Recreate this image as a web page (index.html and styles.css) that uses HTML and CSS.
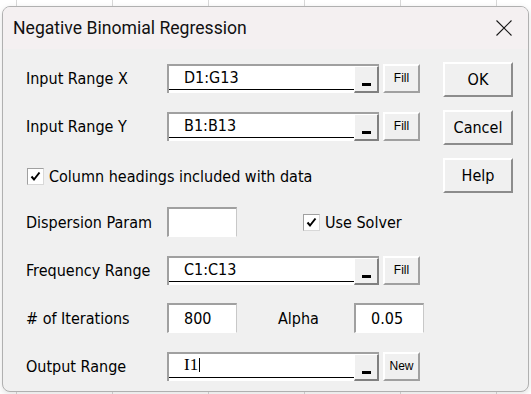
FILE: index.html
```html
<!DOCTYPE html>
<html>
<head>
<meta charset="utf-8">
<link rel="stylesheet" href="styles.css">
</head>
<body>
<div class="dialog">
  <div class="titlebar">
    <span class="title">Negative Binomial Regression</span>
    <svg class="close" width="16" height="16" viewBox="0 0 16 16"><path d="M0.5 0.5 L15.5 15.5 M15.5 0.5 L0.5 15.5" stroke="#1a1a1a" stroke-width="1.1" fill="none"/></svg>
  </div>
  <div class="content">
    <div class="form">
      <div class="row">
        <span class="label">Input Range X</span>
        <div class="range"><span class="text">D1:G13</span><span class="pick"><i class="bar"></i></span></div>
        <button class="small">Fill</button>
      </div>
      <div class="row">
        <span class="label">Input Range Y</span>
        <div class="range"><span class="text">B1:B13</span><span class="pick"><i class="bar"></i></span></div>
        <button class="small">Fill</button>
      </div>
      <div class="row row-check">
        <span class="check"><svg width="15" height="15" viewBox="0 0 15 15"><path d="M3.5 7.5 L6 10.5 L11.5 3.5" stroke="#000" stroke-width="2" fill="none"/></svg></span>
        <span class="check-label">Column headings included with data</span>
      </div>
      <div class="row">
        <span class="label">Dispersion Param</span>
        <div class="box"></div>
        <span class="check solver"><svg width="15" height="15" viewBox="0 0 15 15"><path d="M3.5 7.5 L6 10.5 L11.5 3.5" stroke="#000" stroke-width="2" fill="none"/></svg></span>
        <span class="check-label">Use Solver</span>
      </div>
      <div class="row">
        <span class="label">Frequency Range</span>
        <div class="range"><span class="text">C1:C13</span><span class="pick"><i class="bar"></i></span></div>
        <button class="small">Fill</button>
      </div>
      <div class="row">
        <span class="label"># of Iterations</span>
        <div class="box">800</div>
        <span class="alpha">Alpha</span>
        <div class="box">0.05</div>
      </div>
      <div class="row">
        <span class="label">Output Range</span>
        <div class="range"><span class="text serif">I1<i class="caret"></i></span><span class="pick"><i class="bar"></i></span></div>
        <button class="small">New</button>
      </div>
    </div>
    <div class="actions">
      <button class="btn">OK</button>
      <button class="btn">Cancel</button>
      <button class="btn">Help</button>
    </div>
  </div>
</div>
</body>
</html>
```
FILE: styles.css
```css
html, body {
  margin: 0;
  padding: 0;
}
body {
  width: 531px;
  height: 394px;
  overflow: hidden;
  background-color: #ffffff;
  background-image: repeating-linear-gradient(to right, transparent 0, transparent 16px, #d8d8d8 16px, #d8d8d8 17px, transparent 17px, transparent 96px);
  background-size: 96px 100%;
  background-position: 0 0;
  font-family: "DejaVu Sans Condensed", "Liberation Sans", sans-serif;
  font-size: 16px;
  color: #000;
}
.dialog {
  box-sizing: border-box;
  margin: 6px 0 0 2px;
  width: 527px;
  height: 386px;
  border: 1px solid #b0b0b0;
  border-radius: 8px;
  overflow: hidden;
  background: #f0f0f0;
  box-shadow: 0 2px 6px rgba(0,0,0,0.12);
}
.titlebar {
  height: 42px;
  background: #f4f0f1;
  display: flex;
  align-items: center;
  justify-content: space-between;
  padding: 0 16px 0 10px;
}
.title {
  font-family: Roboto, "Liberation Sans", sans-serif;
  font-size: 17.6px;
  color: #111;
}
.content {
  display: flex;
  padding: 5px 0 0 23px;
}
.form {
  display: flex;
  flex-direction: column;
}
.row {
  box-sizing: border-box;
  height: 48px;
  display: flex;
  align-items: center;
}
.row-check {
  padding-top: 4px;
}
.label {
  width: 141px;
  flex: none;
}
.range {
  box-sizing: border-box;
  width: 212px;
  height: 29px;
  display: flex;
  background: #fff;
  border-top: 2px solid #a0a0a0;
  border-left: 2px solid #a0a0a0;
}
.range .text {
  flex: 1;
  display: flex;
  align-items: center;
  padding-left: 15px;
  border-bottom: 1px solid #000;
  margin-bottom: 3px;
}
.range .serif {
  font-family: "Liberation Serif", serif;
  font-size: 17px;
  padding-left: 15px;
}
.caret {
  display: inline-block;
  width: 1px;
  height: 14px;
  background: #000;
  margin-left: 1px;
}
.pick {
  box-sizing: border-box;
  width: 25px;
  background: #f0f0f0;
  border-top: 1px solid #fff;
  border-left: 1px solid #fff;
  border-right: 2px solid #808080;
  border-bottom: 2px solid #808080;
  display: flex;
  align-items: flex-end;
  justify-content: center;
  padding-bottom: 5px;
}
.bar {
  display: block;
  width: 9px;
  height: 3px;
  background: #000;
}
.small {
  box-sizing: border-box;
  margin-left: 4px;
  width: 37px;
  height: 29px;
  padding: 0;
  background: #f0f0f0;
  border-top: 2px solid #fff;
  border-left: 2px solid #fff;
  border-right: 2px solid #a0a0a0;
  border-bottom: 2px solid #a0a0a0;
  font-family: "Liberation Sans", sans-serif;
  font-size: 12px;
  color: #000;
}
.check {
  box-sizing: border-box;
  width: 17px;
  height: 17px;
  background: #fff;
  border: 1px solid #a0a0a0;
  border-right-color: #d8d8d8;
  border-bottom-color: #d8d8d8;
  display: flex;
  align-items: center;
  justify-content: center;
  margin-left: 1px;
  flex: none;
}
.check-label {
  margin-left: 5px;
}
.solver {
  margin-left: 66px;
}
.box {
  box-sizing: border-box;
  width: 70px;
  height: 30px;
  background: #fff;
  border-top: 2px solid #a0a0a0;
  border-left: 2px solid #a0a0a0;
  border-right: 1px solid #c8c8c8;
  border-bottom: 1px solid #fff;
  padding-left: 15px;
  display: flex;
  align-items: center;
  flex: none;
}
.alpha {
  margin-left: 41px;
  width: 76px;
  flex: none;
}
.actions {
  display: flex;
  flex-direction: column;
  gap: 13px;
  margin-left: 19px;
  padding-top: 8px;
}
.btn {
  box-sizing: border-box;
  width: 70px;
  height: 35px;
  padding: 0;
  background: #f0f0f0;
  border-top: 2px solid #fff;
  border-left: 2px solid #fff;
  border-right: 2px solid #8c8c8c;
  border-bottom: 2px solid #8c8c8c;
  font-family: "DejaVu Sans Condensed", "Liberation Sans", sans-serif;
  font-size: 16px;
  color: #000;
}
```
